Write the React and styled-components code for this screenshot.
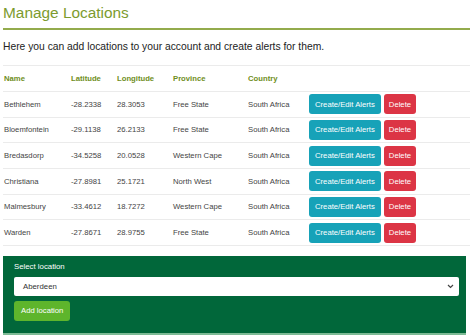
import React from "react";
import styled, { createGlobalStyle } from "styled-components";

const GlobalStyle = createGlobalStyle`
  body {
    margin: 0;
    background: #ffffff;
    font-family: "Liberation Sans", Arial, sans-serif;
  }
`;

const Page = styled.div`
  padding: 0 4px 0 3px;
  color: #3f3f3f;
`;

const Title = styled.h1`
  margin: 0;
  padding-top: 4px;
  font-size: 15.4px;
  line-height: 18px;
  font-weight: normal;
  color: #7c9b2e;
`;

const Rule = styled.div`
  margin-top: 6px;
  height: 2px;
  background: #93ab4c;
`;

const Intro = styled.p`
  margin: 10.5px 0 12.5px;
  font-size: 10.3px;
  line-height: 12px;
  color: #222;
`;

const Table = styled.div`
  border-bottom: 1px solid #ebebeb;
`;

const Row = styled.div`
  display: grid;
  grid-template-columns: 67px 46px 56px 75px 62px 1fr;
  align-items: center;
  box-sizing: border-box;
  height: ${(p) => (p.$head ? "26px" : "25.67px")};
  border-top: 1px solid #ebebeb;
  font-size: 7.7px;
  font-weight: ${(p) => (p.$head ? "bold" : "normal")};
  color: ${(p) => (p.$head ? "#6f8e22" : "#444")};
`;

const Cell = styled.div`
  padding-left: 1px;
  white-space: nowrap;
`;

const Actions = styled.div`
  display: flex;
  gap: 3px;
`;

const Button = styled.button`
  height: 20px;
  padding: 0 ${(p) => p.$pad || "6px"};
  border: none;
  border-radius: 3px;
  font-family: inherit;
  font-size: 7.7px;
  color: #fff;
  background: ${(p) => p.$bg};
  cursor: pointer;
`;

const Panel = styled.div`
  margin: 10px 4px 0 0;
  padding: 6px 7px 12px 11px;
  background: #01673a;
  border-bottom: 2px solid #7dbb95;
`;

const Label = styled.div`
  font-size: 7.8px;
  line-height: 10px;
  color: #fff;
`;

const SelectBox = styled.div`
  position: relative;
  margin-top: 5px;
  height: 19px;
  display: flex;
  align-items: center;
  padding-left: 9px;
  background: #fff;
  border-radius: 2px;
  font-size: 7.8px;
  color: #333;
`;

const Chevron = styled.svg`
  position: absolute;
  right: 5px;
  top: 7px;
`;

const AddButton = styled(Button)`
  display: block;
  margin-top: 5px;
  padding: 0 7px;
`;

const locations = [
  ["Bethlehem", "-28.2338", "28.3053", "Free State"],
  ["Bloemfontein", "-29.1138", "26.2133", "Free State"],
  ["Bredasdorp", "-34.5258", "20.0528", "Western Cape"],
  ["Christiana", "-27.8981", "25.1721", "North West"],
  ["Malmesbury", "-33.4612", "18.7272", "Western Cape"],
  ["Warden", "-27.8671", "28.9755", "Free State"],
];

export default function App() {
  return (
    <Page>
      <GlobalStyle />
      <Title>Manage Locations</Title>
      <Rule />
      <Intro>
        Here you can add locations to your account and create alerts for them.
      </Intro>
      <Table>
        <Row $head>
          <Cell>Name</Cell>
          <Cell>Latitude</Cell>
          <Cell>Longitude</Cell>
          <Cell>Province</Cell>
          <Cell>Country</Cell>
          <Cell />
        </Row>
        {locations.map(([name, lat, lng, prov]) => (
          <Row key={name}>
            <Cell>{name}</Cell>
            <Cell>{lat}</Cell>
            <Cell>{lng}</Cell>
            <Cell>{prov}</Cell>
            <Cell>South Africa</Cell>
            <Actions>
              <Button $bg="#17a2b8">Create/Edit Alerts</Button>
              <Button $bg="#dc3545" $pad="5px">
                Delete
              </Button>
            </Actions>
          </Row>
        ))}
      </Table>
      <Panel>
        <Label>Select location</Label>
        <SelectBox>
          Aberdeen
          <Chevron width="7" height="5" viewBox="0 0 7 5">
            <path d="M1 1 L3.5 3.5 L6 1" fill="none" stroke="#444" strokeWidth="1.2" />
          </Chevron>
        </SelectBox>
        <AddButton $bg="#5eb52c">Add location</AddButton>
      </Panel>
    </Page>
  );
}
